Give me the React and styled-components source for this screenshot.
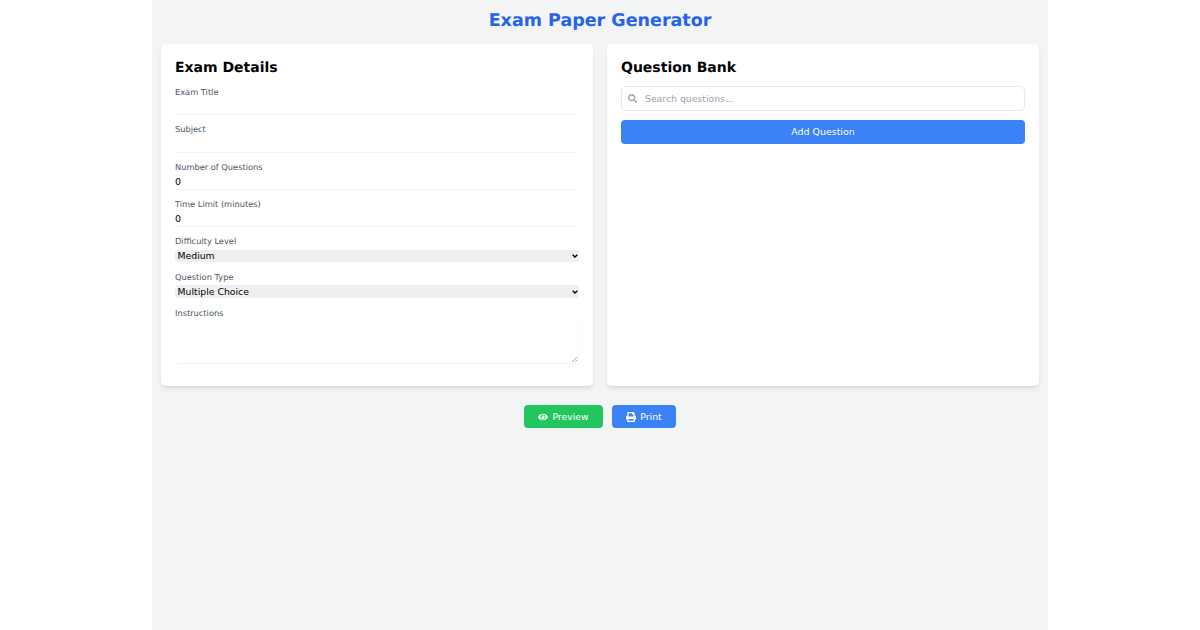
import styled, { createGlobalStyle } from "styled-components";
import { FaEye, FaPrint, FaSearch } from "react-icons/fa";

const chevron =
  "url(\"data:image/svg+xml,%3Csvg xmlns='http://www.w3.org/2000/svg' viewBox='0 0 6 4'%3E%3Cpath d='M.7.7 3 3 5.3.7' fill='none' stroke='%23000' stroke-width='1.3'/%3E%3C/svg%3E\")";

const GlobalStyle = createGlobalStyle`
  html, body {
    margin: 0;
    padding: 0;
    background: #ffffff;
    font-family: "DejaVu Sans", sans-serif;
    text-rendering: geometricPrecision;
  }
  * {
    box-sizing: border-box;
  }
`;

const Page = styled.div`
  width: 896px;
  height: 630px;
  margin: 0 auto;
  padding: 9px;
  background: #f3f4f6;
  overflow: hidden;
`;

const Title = styled.h1`
  margin: 1px 0 12px;
  height: 22px;
  font-size: 17.5px;
  line-height: 22px;
  font-weight: 700;
  color: #2563eb;
  text-align: center;
`;

const Columns = styled.div`
  display: grid;
  grid-template-columns: 432px 432px;
  gap: 14px;
`;

const Card = styled.section`
  height: 342px;
  padding: 14px;
  background: #ffffff;
  border-radius: 5px;
  box-shadow: 0 3px 5px -1px rgba(0, 0, 0, 0.1), 0 2px 3px -2px rgba(0, 0, 0, 0.1);
`;

const CardTitle = styled.h2`
  margin: 0 0 ${(p) => p.$gap}px;
  height: 19px;
  padding-top: 1px;
  font-size: 14px;
  line-height: 18px;
  font-weight: 700;
  color: #000000;
`;

const Field = styled.div`
  margin-bottom: ${(p) => p.$gap}px;
`;

const Label = styled.label`
  display: block;
  font-size: 8.25px;
  line-height: 12px;
  color: #4b5563;
`;

const TextInput = styled.input`
  display: block;
  width: 100%;
  height: 17.45px;
  padding: 1px 0 0;
  border: none;
  border-bottom: 1px solid #f3f4f6;
  border-radius: 3px;
  outline: none;
  background: transparent;
  font-family: inherit;
  font-size: 9.5px;
  color: #000000;
`;

const Select = styled.select`
  display: block;
  width: 100%;
  height: 12.6px;
  margin-top: 2.3px;
  padding: 0 0 0 2.5px;
  border: none;
  border-radius: 3px;
  appearance: none;
  background: #efefef ${chevron} no-repeat right 1.5px center / 6px 4px;
  font-family: inherit;
  font-size: 9.3px;
  color: #000000;
`;

const TextArea = styled.textarea`
  display: block;
  width: 100%;
  height: 45.3px;
  border: none;
  border-bottom: 1px solid #f3f4f6;
  border-right: 1px solid #f9fafb;
  border-radius: 3px;
  outline: none;
  background: transparent;
  font-family: inherit;
  font-size: 9.5px;
  &::-webkit-resizer {
    background: linear-gradient(
        135deg,
        transparent 45%,
        #a8adb5 45%,
        #a8adb5 58%,
        transparent 58%,
        transparent 72%,
        #a8adb5 72%,
        #a8adb5 85%,
        transparent 85%
      )
      no-repeat right 1px bottom 1px / 5px 5px;
  }
`;

const SearchBox = styled.div`
  position: relative;
  margin-bottom: 9px;
`;

const SearchIcon = styled(FaSearch)`
  position: absolute;
  left: 7px;
  top: 8px;
  width: 9px;
  height: 9px;
  color: #9ca3af;
`;

const SearchInput = styled.input`
  display: block;
  width: 100%;
  height: 25px;
  padding: 0 8px 1px 23px;
  border: 1px solid #e5e7eb;
  border-radius: 5px;
  outline: none;
  background: #ffffff;
  font-family: inherit;
  font-size: 9.3px;
  color: #111827;
  &::placeholder {
    color: #9ca3af;
  }
`;

const AddButton = styled.button`
  display: block;
  width: 100%;
  height: 23.5px;
  padding: 0;
  border: none;
  border-radius: 4px;
  background: #3b82f6;
  color: #ffffff;
  font-family: inherit;
  font-size: 9.45px;
`;

const Actions = styled.div`
  display: flex;
  justify-content: center;
  gap: 9px;
  margin-top: 19px;
`;

const ActionButton = styled.button`
  display: flex;
  align-items: center;
  justify-content: center;
  gap: 4px;
  width: ${(p) => p.$width}px;
  height: 23px;
  padding: 0;
  border: none;
  border-radius: 4px;
  background: ${(p) => p.$color};
  color: #ffffff;
  font-family: inherit;
  font-size: 9.3px;
  svg {
    width: 10px;
    height: 10px;
  }
`;

export default function App() {
  return (
    <Page>
      <GlobalStyle />
      <Title>Exam Paper Generator</Title>
      <Columns>
        <Card>
          <CardTitle $gap={8.75}>Exam Details</CardTitle>
          <Field $gap={7.95}>
            <Label>Exam Title</Label>
            <TextInput type="text" />
          </Field>
          <Field $gap={7.95}>
            <Label>Subject</Label>
            <TextInput type="text" />
          </Field>
          <Field $gap={7.95}>
            <Label>Number of Questions</Label>
            <TextInput type="number" defaultValue="0" />
          </Field>
          <Field $gap={7.95}>
            <Label>Time Limit (minutes)</Label>
            <TextInput type="number" defaultValue="0" />
          </Field>
          <Field $gap={8.8}>
            <Label>Difficulty Level</Label>
            <Select defaultValue="Medium">
              <option>Easy</option>
              <option>Medium</option>
              <option>Hard</option>
            </Select>
          </Field>
          <Field $gap={9}>
            <Label>Question Type</Label>
            <Select defaultValue="Multiple Choice">
              <option>Multiple Choice</option>
              <option>True/False</option>
              <option>Short Answer</option>
            </Select>
          </Field>
          <Field $gap={0}>
            <Label>Instructions</Label>
            <TextArea />
          </Field>
        </Card>
        <Card>
          <CardTitle $gap={9}>Question Bank</CardTitle>
          <SearchBox>
            <SearchIcon />
            <SearchInput type="text" placeholder="Search questions..." />
          </SearchBox>
          <AddButton>Add Question</AddButton>
        </Card>
      </Columns>
      <Actions>
        <ActionButton $width={79} $color="#22c55e">
          <FaEye />
          Preview
        </ActionButton>
        <ActionButton $width={64} $color="#3b82f6">
          <FaPrint />
          Print
        </ActionButton>
      </Actions>
    </Page>
  );
}
